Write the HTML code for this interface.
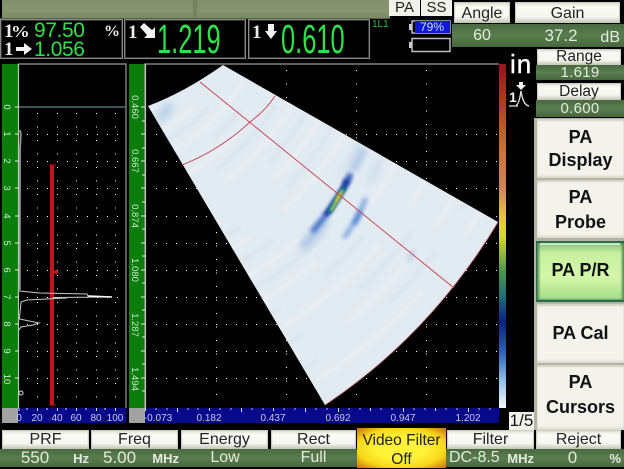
<!DOCTYPE html>
<html><head><meta charset="utf-8">
<style>
html,body{margin:0;padding:0;background:#000;width:624px;height:468px;overflow:hidden}
*{box-sizing:border-box}
.a{position:absolute;white-space:nowrap}
body{font-family:"Liberation Sans",sans-serif;color:#000}
.lb{position:absolute;background:linear-gradient(#dcdcd2,#fbfbf6 25%,#f6f6f0 70%,#c4c6b6);color:#222;font-size:16px;text-align:center;box-shadow:inset 0 0 1px 1px #c8c8ba;overflow:hidden;white-space:nowrap}
.vl{position:absolute;background:linear-gradient(#49693f,#5a7d50 50%,#47673d);color:#e2ecdc;font-size:17px;text-align:center;overflow:hidden;white-space:nowrap}
.u{position:absolute;right:2px;font-weight:bold;font-size:13px;color:#e4ece0}
.btn{position:absolute;left:537px;width:87px;background:#f3f3ec;box-shadow:inset 0 2px 1px #d4d4c8,inset 0 -2px 2px #d8d8cc;color:#111;font-weight:bold;font-size:18px;line-height:25px;text-align:center;padding:0}
.box{position:absolute;top:19px;height:40px;border:1px solid #8a8a8a;background:#000;box-shadow:inset 0 0 0 1px #333}
.g{color:#30e048;font-family:"Liberation Sans",sans-serif}
.w{color:#eee;font-weight:bold}
</style></head><body>
<div class="a" style="left:2px;top:0;width:388px;height:18px;background:linear-gradient(#7f8e6c,#87966f 60%,#7a8967)"></div>
<div class="a" style="left:193px;top:0;width:4px;height:18px;background:#74825f"></div>
<div class="a" style="left:0;top:18px;width:390px;height:1px;background:#55604a"></div>

<div class="box" style="left:0;width:123px"></div>
<div class="box" style="left:124px;width:122px"></div>
<div class="box" style="left:248px;width:122px"></div>
<div class="a w" style="left:4px;top:21px;font:bold 19px 'Liberation Serif',serif;color:#eee">1</div>
<div class="a w" style="left:11px;top:22px;font:bold 17px 'Liberation Serif',serif;color:#eee;transform:scaleX(1.1);transform-origin:0 0">%</div>
<div class="a g" style="left:34px;top:19px;font-size:21px;letter-spacing:-.4px">97.50</div>
<div class="a w" style="left:104px;top:23px;font:bold 16px 'Liberation Serif',serif;color:#eee">%</div>
<div class="a w" style="left:4px;top:39px;font:bold 19px 'Liberation Serif',serif;color:#eee">1</div>
<svg class="a" style="left:15px;top:42px" width="18" height="14"><path d="M1 5H9V1L17 7L9 13V9H1Z" fill="#f2f2f2"/></svg>
<div class="a g" style="left:34px;top:38px;font-size:21px;letter-spacing:-.4px">1.056</div>
<div class="a w" style="left:128px;top:22px;font:bold 19px 'Liberation Serif',serif;color:#eee">1</div>
<svg class="a" style="left:139px;top:22px" width="18" height="18"><path d="M1 5L5 1L13 8L16 5V16H5L8 13Z" fill="#f2f2f2"/></svg>
<div class="a g" style="left:157px;top:17px;font-size:41px;line-height:44px;transform:scaleX(.62);transform-origin:0 0">1.219</div>
<div class="a w" style="left:252px;top:22px;font:bold 19px 'Liberation Serif',serif;color:#eee">1</div>
<svg class="a" style="left:264px;top:23px" width="14" height="17"><path d="M4 1H10V8H13L7 16L1 8H4Z" fill="#f2f2f2"/></svg>
<div class="a g" style="left:281px;top:17px;font-size:41px;line-height:44px;transform:scaleX(.62);transform-origin:0 0">0.610</div>
<div class="a g" style="left:372px;top:19px;font-size:10px;color:#2bc040">1L1</div>

<div class="a" style="left:389px;top:0;width:31px;height:16px;background:#f2f2ec;font-size:15px;text-align:center;line-height:16px;color:#222">PA</div>
<div class="a" style="left:421px;top:0;width:31px;height:16px;background:#f2f2ec;font-size:15px;text-align:center;line-height:16px;color:#222">SS</div>
<svg class="a" style="left:408px;top:17px" width="44" height="37">
<rect x="4" y="4" width="38" height="12" fill="#000" stroke="#bbb" stroke-width="1.5"/><rect x="1" y="7" width="3" height="6" fill="#ccc"/>
<rect x="7" y="4" width="35" height="12" fill="#1018d8"/>
<text x="24" y="14" font-size="12" fill="#cdd" text-anchor="middle" font-family="Liberation Sans">79%</text>
<rect x="4" y="21.5" width="38" height="13" fill="#000" stroke="#bbb" stroke-width="1.5"/><rect x="1" y="25" width="3" height="6" fill="#ccc"/>
</svg>

<div class="lb" style="left:454px;top:2px;width:56px;height:21px;line-height:23px">Angle</div>
<div class="vl" style="left:452px;top:24px;width:60px;height:23px;line-height:23px;font-size:16px">60</div>
<div class="lb" style="left:515px;top:2px;width:105px;height:21px;line-height:23px">Gain</div>
<div class="vl" style="left:512px;top:24px;width:112px;height:23px;line-height:23px;padding-right:14px">37.2<span class="u" style="font-weight:normal;font-size:16px;top:2px;right:4px">dB</span></div>

<div class="lb" style="left:537px;top:49px;width:84px;height:16px;line-height:16px;font-size:15.5px">Range</div>
<div class="vl" style="left:536px;top:65px;width:88px;height:15px;line-height:16px;font-size:15px;letter-spacing:.3px">1.619</div>
<div class="lb" style="left:537px;top:83px;width:84px;height:17px;line-height:17px;font-size:15.5px">Delay</div>
<div class="vl" style="left:536px;top:100px;width:88px;height:17px;line-height:17px;font-size:15px;letter-spacing:.3px">0.600</div>

<div class="a" style="left:534px;top:118px;width:90px;height:312px;background:#b4b4a6"></div>
<div class="btn" style="top:119px;height:59px;padding-top:7px;line-height:23px">PA<br>Display</div>
<div class="btn" style="top:180px;height:58px;padding-top:5px">PA<br>Probe</div>
<div class="a" style="left:536px;top:241px;width:88px;height:61px;background:#2f6a48"></div>
<div class="btn" style="top:243px;height:57px;line-height:55px;background:linear-gradient(#84c078,#c8f0a0 18%,#d4f6a8 60%,#a4dc88);box-shadow:inset 2px 0 2px #4f8a58,inset -2px 0 2px #4f8a58">PA P/R</div>
<div class="a" style="left:540px;top:243px;width:80px;height:2px;background:#c8e8c0"></div>
<div class="btn" style="top:304px;height:59px;line-height:58px">PA Cal</div>
<div class="btn" style="top:365px;height:65px;padding-top:5px">PA<br>Cursors</div>

<div class="a" style="left:510px;top:49px;color:#fff;font:26px 'Liberation Sans',sans-serif;letter-spacing:1px;-webkit-text-stroke:.4px #fff">in</div>
<svg class="a" style="left:508px;top:80px" width="24" height="28"><text x="1" y="22" font-size="14" font-weight="bold" fill="#eee" font-family="Liberation Sans">1</text><path d="M8 25Q11 25 13 11Q15 25 21 26" stroke="#ddd" fill="none" stroke-width="1.4"/><path d="M11 2H15V5H18L13 10L8 5H11Z" fill="#eee"/><path d="M1 26H10" stroke="#eee" stroke-width="1.2"/></svg>

<svg class="a" style="left:0;top:62px" width="510" height="364" viewBox="0 62 510 364">
<defs>
<linearGradient id="cb" x1="0" y1="0" x2="0" y2="1">
<stop offset="0" stop-color="#9a1020"/><stop offset=".12" stop-color="#b04020"/><stop offset=".24" stop-color="#c87030"/><stop offset=".36" stop-color="#cf8560"/><stop offset=".46" stop-color="#e8d030"/><stop offset=".5" stop-color="#d8d830"/><stop offset=".6" stop-color="#50984e"/><stop offset=".68" stop-color="#206878"/><stop offset=".75" stop-color="#0c2080"/><stop offset=".84" stop-color="#2e64b4"/><stop offset=".92" stop-color="#90c0e8"/><stop offset="1" stop-color="#f4f8fc"/>
</linearGradient>
<filter id="b1" x="-50%" y="-50%" width="200%" height="200%"><feGaussianBlur stdDeviation="1"/></filter>
<filter id="b2" x="-50%" y="-50%" width="200%" height="200%"><feGaussianBlur stdDeviation="2.2"/></filter>
<filter id="b3" x="-80%" y="-80%" width="260%" height="260%"><feGaussianBlur stdDeviation="4"/></filter>
<filter id="b4" x="-50%" y="-50%" width="200%" height="200%"><feGaussianBlur stdDeviation="1.5"/></filter>
<filter id="b5" x="-10%" y="-10%" width="120%" height="120%"><feGaussianBlur stdDeviation="1.6"/></filter>
<clipPath id="sec"><path d="M148 106Q185 92 223 65L498 222Q430 335 325 405Z"/></clipPath>
</defs>
<rect x="2" y="64" width="16" height="344" fill="#0a7d0a"/>
<rect x="129" y="64" width="16" height="344" fill="#0a7d0a"/>
<rect x="2" y="408" width="16" height="15" fill="#a2a2a2"/>
<rect x="129" y="408" width="16" height="15" fill="#a2a2a2"/>
<rect x="18" y="408" width="108" height="15" fill="#08088a"/>
<rect x="145" y="408" width="354" height="15" fill="#08088a"/>
<path d="M18 64H126V408M145 408V64H499" fill="none" stroke="#9a9a9a" stroke-width="1.2"/>
<path d="M18.5 64V408M145.5 64V408" stroke="#c0c0c0" stroke-width="1.2"/>
<rect x="499" y="64" width="7" height="344" fill="url(#cb)"/>

<g stroke="#fff" stroke-width="1" fill="none">
<g stroke-dasharray="1 9">
<path d="M27 134.5H125M27 161.5H125M27 188.5H125M27 216.5H125M27 243.5H125M27 270.5H125M27 297.5H125M27 324.5H125M27 351.5H125M27 378.5H125"/>
<path d="M156 134.5H498M156 161.5H498M156 188.5H498M156 216.5H498M156 243.5H498M156 270.5H498M156 297.5H498M156 324.5H498M156 351.5H498M156 378.5H498"/>
</g>
<g stroke-dasharray="1 12.5">
<path d="M37.5 113V405M57.5 113V405M76.5 113V405M96.5 113V405M115.5 113V405"/>
<path d="M216.5 70V405M286.5 70V405M356.5 70V405M426.5 70V405"/>
</g>
<path d="M141 107H145M141 134H145M141 161H145M141 188H145M141 216H145M141 243H145M141 270H145M141 297H145M141 324H145M141 351H145M141 378H145M142 121H145M142 148H145M142 175H145M142 202H145M142 229H145M142 256H145M142 283H145M142 310H145M142 337H145M142 364H145M142 391H145" stroke="#e8e8e8"/>
<path d="M15 107H19M15 134H19M15 161H19M15 188H19M15 216H19M15 243H19M15 270H19M15 297H19M15 324H19M15 351H19M15 378H19" stroke="#e8e8e8"/>
<path d="M37.5 408V411M57.5 408V411M76.5 408V411M96.5 408V411M115.5 408V411M19 408V411" stroke="#ddd"/>
<path d="M27 408V410M47 408V410M66 408V410M86 408V410M105 408V410" stroke="#ddd"/>
<path d="M145.5 408V411M177.5 408V412M209.5 408V411M241.5 408V412M273.5 408V411M305.5 408V412M338.5 408V412M370.5 408V411M403.5 408V412M435.5 408V411M468.5 408V412" stroke="#ddd"/>
<path d="M156 408V410M167 408V410M188 408V410M198 408V410M220 408V410M231 408V410M252 408V410M263 408V410M284 408V410M295 408V410M316 408V410M327 408V410M349 408V410M360 408V410M381 408V410M392 408V410M414 408V410M425 408V410M446 408V410M457 408V410M479 408V410M490 408V410" stroke="#bbb"/>
</g>
<path d="M19 107H125" stroke="#6fa8b0" stroke-width="1"/>

<rect x="50" y="165" width="4" height="240" fill="#c4141c"/>
<path d="M49 165H56M49 405H56" stroke="#c4141c"/><circle cx="56" cy="272" r="2" fill="#d01020"/>
<path d="M20 130L20.8 134L20 150L19.8 290" stroke="#999" fill="none" stroke-width="1.8"/>
<path d="M19 291L40 293L87 294L88 296L112 297L53 297.5L67 298L27 300L21 302L20 313L19.5 319L39 323L33 325L21 327L19 330" stroke="#c8c8c8" fill="none" stroke-width="1"/>
<path d="M88 296L112 297" stroke="#fff" stroke-width="1.5"/>
<circle cx="21" cy="393" r="2" fill="none" stroke="#ddd"/>

<g font-family="Liberation Sans" font-size="9.5" fill="#cfe8cf" text-anchor="middle">
<text transform="translate(4,107) rotate(90)" >0</text>
<text transform="translate(4,134) rotate(90)">1</text>
<text transform="translate(4,161) rotate(90)">2</text>
<text transform="translate(4,188) rotate(90)">3</text>
<text transform="translate(4,216) rotate(90)">4</text>
<text transform="translate(4,243) rotate(90)">5</text>
<text transform="translate(4,270) rotate(90)">6</text>
<text transform="translate(4,297) rotate(90)">7</text>
<text transform="translate(4,324) rotate(90)">8</text>
<text transform="translate(4,351) rotate(90)">9</text>
<text transform="translate(4,379) rotate(90)">10</text>
<text transform="translate(132,107) rotate(90)">0.460</text>
<text transform="translate(132,161) rotate(90)">0.667</text>
<text transform="translate(132,216) rotate(90)">0.874</text>
<text transform="translate(132,270) rotate(90)">1.080</text>
<text transform="translate(132,325) rotate(90)">1.287</text>
<text transform="translate(132,379) rotate(90)">1.494</text>
</g>
<g font-family="Liberation Sans" font-size="10" fill="#c4cce0" text-anchor="middle">
<text x="19" y="421">0</text><text x="37" y="421">20</text><text x="57" y="421">40</text><text x="76" y="421">60</text><text x="96" y="421">80</text><text x="115" y="421">100</text>
<text x="158" y="421">-0.073</text><text x="209" y="421">0.182</text><text x="273" y="421">0.437</text><text x="338" y="421">0.692</text><text x="403" y="421">0.947</text><text x="468" y="421">1.202</text>
</g>

<!-- sector -->
<path d="M148 106Q185 92 223 65L498 222Q430 335 325 405Z" fill="#e3ebf2"/>
<g clip-path="url(#sec)">
<g fill="none" opacity=".5" stroke-width="4">
<g stroke="#f0f4f7" filter="url(#b5)">
<circle cx="73" cy="-20" r="175" stroke-dasharray="90 50 60 80"/>
<circle cx="73" cy="-20" r="198" stroke-dasharray="60 30 120 60"/>
<circle cx="73" cy="-20" r="225" stroke-dasharray="120 40 80 50"/>
<circle cx="73" cy="-20" r="252" stroke-dasharray="70 60 100 40"/>
<circle cx="73" cy="-20" r="283" stroke-dasharray="100 30 90 70"/>
<circle cx="73" cy="-20" r="312" stroke-dasharray="80 50 130 40"/>
<circle cx="73" cy="-20" r="344" stroke-dasharray="110 50 70 60"/>
<circle cx="73" cy="-20" r="372" stroke-dasharray="70 40 150 60"/>
<circle cx="73" cy="-20" r="405" stroke-dasharray="130 40 70 50"/>
<circle cx="73" cy="-20" r="438" stroke-dasharray="90 60 110 40"/>
<circle cx="73" cy="-20" r="468" stroke-dasharray="140 50 80 70"/>
</g>
<g stroke="#d2deea" filter="url(#b5)">
<circle cx="73" cy="-20" r="186" stroke-dasharray="50 90 70 60"/>
<circle cx="73" cy="-20" r="212" stroke-dasharray="80 60 40 100"/>
<circle cx="73" cy="-20" r="238" stroke-dasharray="60 70 90 50"/>
<circle cx="73" cy="-20" r="268" stroke-dasharray="90 50 60 80"/>
<circle cx="73" cy="-20" r="298" stroke-dasharray="50 80 100 60"/>
<circle cx="73" cy="-20" r="328" stroke-dasharray="70 60 80 90"/>
<circle cx="73" cy="-20" r="358" stroke-dasharray="100 70 50 60"/>
<circle cx="73" cy="-20" r="388" stroke-dasharray="60 50 90 80"/>
<circle cx="73" cy="-20" r="422" stroke-dasharray="80 70 60 60"/>
<circle cx="73" cy="-20" r="452" stroke-dasharray="70 90 80 50"/>
</g>
</g>
<ellipse cx="165" cy="112" rx="5" ry="12" transform="rotate(40 165 112)" fill="#b4cfe9" filter="url(#b3)"/>
<path d="M302 248L326 220" stroke="#8fb2de" stroke-width="6" filter="url(#b3)" fill="none"/>
<path d="M352 172L364 148" stroke="#a0bfe4" stroke-width="7" filter="url(#b3)" fill="none"/>
<path d="M312 232L326 215" stroke="#3e70c6" stroke-width="5" filter="url(#b2)" fill="none"/>
<path d="M344 186L351 174" stroke="#2c58b8" stroke-width="6" filter="url(#b2)" fill="none"/>
<path d="M325 216L338 197L348 180" stroke="#1a3fa8" stroke-width="6" filter="url(#b4)" fill="none"/>
<path d="M329 213L339 196L345 187" stroke="#186a90" stroke-width="5" filter="url(#b1)" fill="none"/>
<path d="M331 211L339 196L343 190" stroke="#80c068" stroke-width="3.5" filter="url(#b1)" fill="none"/>
<path d="M336 202L341 193" stroke="#d8b830" stroke-width="2.5" filter="url(#b1)" fill="none"/>
<path d="M344 238L356 220L366 198" stroke="#86aee2" stroke-width="5" filter="url(#b2)" fill="none"/>
<path d="M354 224L361 211" stroke="#4f80d0" stroke-width="4" filter="url(#b2)" fill="none"/>
<path d="M372 182L378 160" stroke="#c8d9ec" stroke-width="5" filter="url(#b3)" fill="none"/>
<path d="M408 262L414 250" stroke="#afc8e8" stroke-width="3" filter="url(#b2)" fill="none"/>
</g>
<g fill="none" stroke="#c83a48" stroke-width=".9">
<path d="M200 82L454 288"/>
<path d="M182 165Q220 150 250 122Q266 110 275 96"/>
<path d="M498 222Q430 335 325 405" stroke="#d87a80" stroke-width=".8"/>
</g>
</svg>

<div class="a" style="left:509px;top:412px;width:25px;height:18px;background:#f2f2ec;font:17px/18px 'Liberation Sans',sans-serif;text-align:center;color:#111">1/5</div>

<div class="lb" style="left:2px;top:430px;width:87px;height:19px;line-height:19px">PRF</div>
<div class="lb" style="left:91px;top:430px;width:87px;height:19px;line-height:19px">Freq</div>
<div class="lb" style="left:181px;top:430px;width:87px;height:19px;line-height:19px">Energy</div>
<div class="lb" style="left:271px;top:430px;width:85px;height:19px;line-height:19px">Rect</div>
<div class="lb" style="left:447px;top:430px;width:87px;height:19px;line-height:19px">Filter</div>
<div class="lb" style="left:536px;top:430px;width:85px;height:19px;line-height:19px">Reject</div>

<div class="vl" style="left:0;top:449px;width:90px;height:18px;line-height:18px;padding-right:20px">550<span class="u" style="top:1px;right:1px">Hz</span></div>
<div class="vl" style="left:90px;top:449px;width:90px;height:18px;line-height:18px;text-align:left;padding-left:13px">5.00<span class="u" style="top:1px;right:1px">MHz</span></div>
<div class="vl" style="left:180px;top:449px;width:90px;height:18px;line-height:18px;font-size:16px">Low</div>
<div class="vl" style="left:270px;top:449px;width:87px;height:18px;line-height:18px;font-size:16px">Full</div>
<div class="a" style="left:357px;top:428px;width:89px;height:40px;background:radial-gradient(ellipse at center,#fff238 40%,#f8d818 70%,#c86a10 100%);text-align:center;font-size:15.5px;line-height:19px;padding-top:3px;color:#222">Video Filter<br>Off</div>
<div class="vl" style="left:446px;top:449px;width:89px;height:18px;line-height:18px;text-align:left;padding-left:3px;font-size:16px">DC-8.5<span class="u" style="top:1px;right:1px">MHz</span></div>
<div class="vl" style="left:535px;top:449px;width:89px;height:18px;line-height:18px;padding-right:14px">0<span class="u" style="top:1px;right:3px">%</span></div>
</body></html>
